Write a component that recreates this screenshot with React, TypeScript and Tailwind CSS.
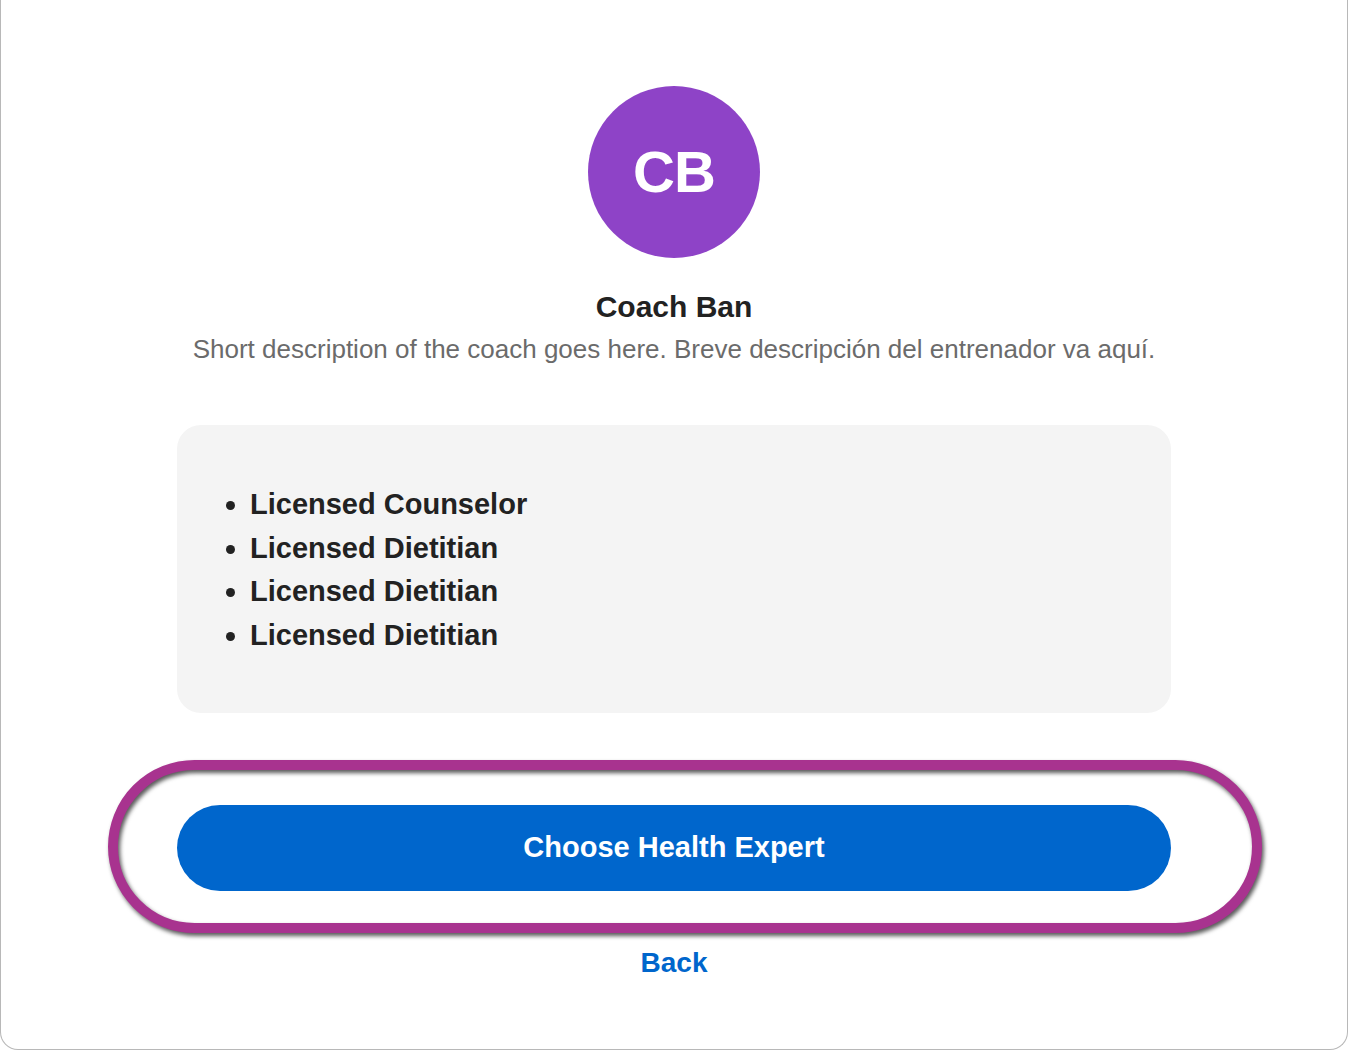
import React from 'react';

const credentials = ['Licensed Counselor', 'Licensed Dietitian', 'Licensed Dietitian', 'Licensed Dietitian'];

export default function App() {
  return (
    <div className="h-[1050px] w-full bg-white" style={{ fontFamily: '"Liberation Sans", Arial, sans-serif' }}>
      <div className="h-full w-full rounded-b-[18px] border-x border-b border-[#b8b8b8] bg-white flex flex-col items-center pt-[86px]">
        {/* Avatar */}
        <div className="w-[172px] h-[172px] rounded-full bg-[#8e43c7] flex items-center justify-center">
          <span className="text-white font-bold text-[58px] tracking-[-1px] leading-none">CB</span>
        </div>

        <h1 className="mt-[31px] text-[30px] leading-[36px] font-bold text-[#222222]">Coach Ban</h1>
        <p className="mt-[8px] text-[26px] leading-[32px] text-[#6b6b6b]">
          Short description of the coach goes here. Breve descripción del entrenador va aquí.
        </p>

        {/* Credentials */}
        <div className="mt-[60px] w-[994px] h-[288px] rounded-[24px] bg-[#f4f4f4] pt-[58px] pl-[73px]">
          <ul className="list-disc text-[29px] leading-[43.5px] font-bold text-[#222222]">
            {credentials.map((c, i) => (
              <li key={i}>{c}</li>
            ))}
          </ul>
        </div>

        {/* Choose button with highlight ring */}
        <div className="relative mt-[92px] w-[994px]">
          <div className="absolute left-[-69px] right-[-91px] top-[-45px] bottom-[-42px] rounded-full border-[10px] border-[#a8338f] drop-shadow-[2px_3px_2px_rgba(0,0,0,0.65)] pointer-events-none" />
          <button className="w-full h-[86px] rounded-full bg-[#0066cc] text-white text-[29px] font-bold">
            Choose Health Expert
          </button>
        </div>

        <button className="mt-[55px] text-[28px] leading-[34px] font-bold text-[#0066cc]">Back</button>
      </div>
    </div>
  );
}
